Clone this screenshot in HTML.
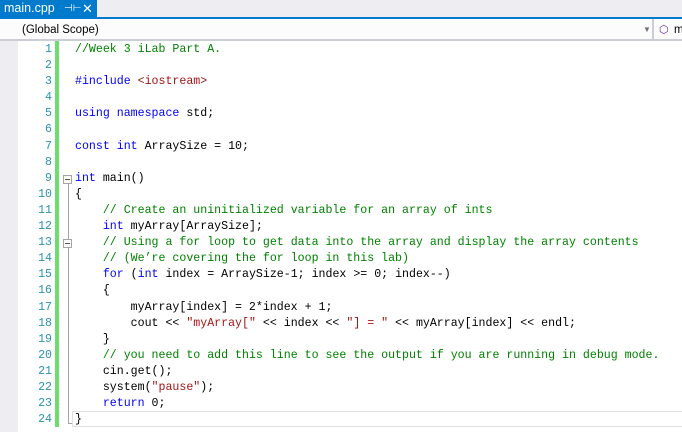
<!DOCTYPE html>
<html><head><meta charset="utf-8"><style>
body{margin:0;width:682px;height:432px;overflow:hidden;background:#fff;font-family:"Liberation Sans",sans-serif;position:relative}
#tabbar{position:absolute;left:0;top:0;width:682px;height:17px;background:#eeeef2}
#tab{position:absolute;left:0;top:0;width:97px;height:17px;background:#007acc;color:#fff;font-size:12.5px;line-height:17px}
#tab span{position:absolute}
#blue{position:absolute;left:0;top:17px;width:682px;height:2px;background:#007acc}
#scope{position:absolute;left:0;top:19px;width:682px;height:20px;background:#fcfcfc;border-bottom:2px solid #ccced6;font-size:11.5px;line-height:22px}
#gray{position:absolute;left:0;top:41px;width:18px;height:391px;background:#eeeef2}
#green{position:absolute;left:55px;top:41px;width:4px;height:386px;background:#6fdc6f}
.code{position:absolute;left:0;top:42px;font-family:"Liberation Mono",monospace;font-size:11.6px;line-height:16.1px;white-space:pre}
.nums{position:absolute;left:18px;top:42px;width:34px;text-align:right;color:#2b91af;font-family:"Liberation Mono",monospace;font-size:11.6px;line-height:16.1px;white-space:pre}
.c{color:#008000}.k{color:#0000ff}.s{color:#a31515}.p{color:#808080}
</style></head><body>
<div id="tabbar"><div id="tab"><span style="left:4px">main.cpp</span><span style="left:64px;font-size:10px">⊣⊢</span><span style="left:82px;font-size:13px">✕</span></div></div>
<div id="blue"></div>
<div id="scope"><span style="position:absolute;left:22px">(Global Scope)</span>
<span style="position:absolute;left:643px;top:0;color:#717171;font-size:8px">▼</span>
<div style="position:absolute;left:652px;top:0;width:2px;height:20px;background:#ccced6"></div>
<span style="position:absolute;left:659px;color:#652d90;font-size:11px">⬡</span>
<span style="position:absolute;left:674px">m</span></div>
<div id="gray"></div>
<div id="green"></div>
<div style="position:absolute;left:68px;top:183px;width:1px;height:240px;background:#a5a5a5"></div>
<div style="position:absolute;left:68px;top:423px;width:5px;height:1px;background:#a5a5a5"></div>
<div style="position:absolute;left:63px;top:175px;width:9px;height:9px;border:1px solid #a5a5a5;background:#fff;box-sizing:border-box"><div style="position:absolute;left:1px;top:3px;width:5px;height:1px;background:#555"></div></div>
<div style="position:absolute;left:63px;top:239px;width:9px;height:9px;border:1px solid #a5a5a5;background:#fff;box-sizing:border-box"><div style="position:absolute;left:1px;top:3px;width:5px;height:1px;background:#555"></div></div>
<div style="position:absolute;left:72px;top:411px;width:612px;height:16px;border:1px solid #e0e0e0;border-right:none;box-sizing:border-box"></div>
<div class="nums">1
2
3
4
5
6
7
8
9
10
11
12
13
14
15
16
17
18
19
20
21
22
23
24</div>
<div class="code" style="left:75px"><span class="c">//Week 3 iLab Part A.</span>

<span class="k">#include</span> <span class="s">&lt;iostream&gt;</span>

<span class="k">using namespace</span> std;

<span class="k">const int</span> ArraySize = 10;

<span class="k">int</span> main()
{
    <span class="c">// Create an uninitialized variable for an array of ints</span>
    <span class="k">int</span> myArray[ArraySize];
    <span class="c">// Using a for loop to get data into the array and display the array contents</span>
    <span class="c">// (We’re covering the for loop in this lab)</span>
    <span class="k">for</span> (<span class="k">int</span> index = ArraySize-1; index &gt;= 0; index--)
    {
        myArray[index] = 2*index + 1;
        cout &lt;&lt; <span class="s">"myArray["</span> &lt;&lt; index &lt;&lt; <span class="s">"] = "</span> &lt;&lt; myArray[index] &lt;&lt; endl;
    }
    <span class="c">// you need to add this line to see the output if you are running in debug mode.</span>
    cin.get();
    system(<span class="s">"pause"</span>);
    <span class="k">return</span> 0;
}</div>
</body></html>
